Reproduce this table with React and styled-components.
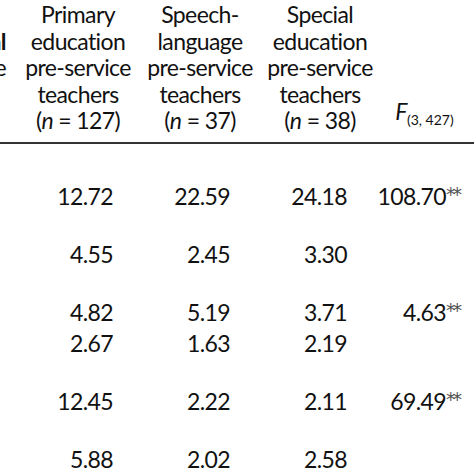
import styled, { createGlobalStyle } from 'styled-components'

const GlobalStyle = createGlobalStyle`
  html, body {
    margin: 0;
    padding: 0;
    background: #ffffff;
    overflow: hidden;
  }
  body {
    font-family: Lato, "Open Sans", sans-serif;
    color: #111;
  }
`

const COLUMNS = '21px 114px 130px 110px 99px'

const rows = [
  { space: 38, values: ['12.72', '22.59', '24.18', '108.70'], star: true },
  { space: 29, values: ['4.55', '2.45', '3.30', ''] },
  { space: 29, values: ['4.82', '5.19', '3.71', '4.63'], star: true },
  { space: 2, values: ['2.67', '1.63', '2.19', ''] },
  { space: 29, values: ['12.45', '2.22', '2.11', '69.49'], star: true },
  { space: 29, values: ['5.88', '2.02', '2.58', ''] },
]

const groups = [
  { lines: ['Primary', 'education', 'pre-service', 'teachers'], n: 127 },
  { lines: ['Speech-', 'language', 'pre-service', 'teachers'], n: 37 },
  { lines: ['Special', 'education', 'pre-service', 'teachers'], n: 38 },
]

const pads = [22, 35, 28]

export default function App() {
  return (
    <>
      <GlobalStyle />
      <Table>
        <HeadRow>
          <LabelCell>
            <Line>&nbsp;</Line>
            <Line>
              <strong>Total</strong>
            </Line>
            <Line>Measure</Line>
          </LabelCell>
          {groups.map(g => (
            <HeadCell key={g.n}>
              {g.lines.map(l => (
                <Line key={l}>{l}</Line>
              ))}
              <Line>
                (<i>n</i> = {g.n})
              </Line>
            </HeadCell>
          ))}
          <HeadCell>
            <Line>
              <i>F</i>
              <Sub>(3, 427)</Sub>
            </Line>
          </HeadCell>
        </HeadRow>

        {rows.map((r, i) => (
          <DataRow key={i} $space={r.space}>
            <span />
            {r.values.slice(0, 3).map((v, j) => (
              <Num key={j} $pad={pads[j]}>
                {v}
              </Num>
            ))}
            <Num $pad={7}>
              {r.values[3]}
              <Stars>{r.star ? '**' : ''}</Stars>
            </Num>
          </DataRow>
        ))}
      </Table>
    </>
  )
}

const Table = styled.div`
  width: 474px;
  height: 474px;
  overflow: hidden;
  font-size: 23px;
  letter-spacing: -0.6px;
`

const HeadRow = styled.div`
  display: grid;
  grid-template-columns: ${COLUMNS};
  align-items: end;
  padding-top: 1px;
  padding-bottom: 8px;
  border-bottom: 2px solid #333;
`

const Line = styled.div`
  line-height: 26.5px;
  white-space: nowrap;
`

const HeadCell = styled.div`
  display: flex;
  flex-direction: column;
  align-items: center;
  text-align: center;
`

const LabelCell = styled.div`
  display: flex;
  flex-direction: column;
  align-items: flex-end;
  align-self: start;
  padding-right: 15px;
  overflow: hidden;
`

const Sub = styled.sub`
  font-size: 14px;
  vertical-align: -5px;
  letter-spacing: 0;
`

const DataRow = styled.div`
  display: grid;
  grid-template-columns: ${COLUMNS};
  height: 29px;
  align-items: center;
  margin-top: ${p => p.$space}px;
`

const Num = styled.div`
  text-align: right;
  padding-right: ${p => p.$pad}px;
  white-space: nowrap;
`

const Stars = styled.sup`
  display: inline-block;
  width: 21px;
  text-align: left;
  font-family: "DejaVu Sans", sans-serif;
  font-size: 19px;
  color: #555;
  vertical-align: 4px;
  line-height: 0;
  letter-spacing: -3px;
`
